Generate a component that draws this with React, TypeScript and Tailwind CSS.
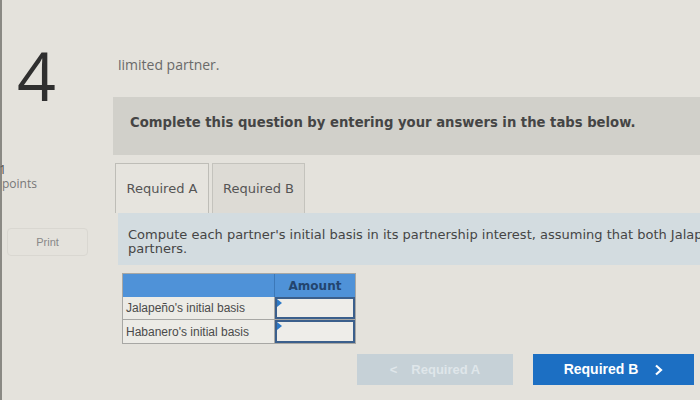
import React from "react";

export default function App() {
  return (
    <div className="w-[700px] h-[400px] overflow-hidden bg-[#e4e2dc] flex font-['DejaVu_Sans',sans-serif] text-[#444]">
      {/* left column */}
      <div className="w-[113px] shrink-0 flex flex-col border-l-2 border-[#8a8984]">
        <div className="h-[44px]" />
        <div className="pl-[15px] text-[68px] leading-[62px] font-['Open_Sans',sans-serif] font-normal text-[#2f2f2f]">4</div>
        <div className="h-[56px]" />
        <div className="text-[13px] leading-[14px] text-[#555] -ml-[3px] font-['Open_Sans',sans-serif]">1</div>
        <div className="text-[12px] leading-[16px] text-[#777] font-['Open_Sans',sans-serif]">points</div>
        <div className="h-[36px]" />
        <div className="ml-[5px] w-[81px] h-[28px] border border-[#d9d7d1] rounded-sm flex items-center justify-center text-[11px] text-[#888] font-['Liberation_Sans',sans-serif]">
          Print
        </div>
      </div>

      {/* right column */}
      <div className="flex-1 flex flex-col">
        <div className="h-[60px]" />
        <div className="ml-[5px] h-[16px] overflow-hidden text-[14px] leading-[15px] text-[#6a6a6a] font-['Open_Sans',sans-serif]">
          <div className="-mt-[3px]">limited partner.</div>
        </div>
        <div className="h-[21px]" />
        <div className="h-[58px] bg-[#d1d0ca] flex items-center pl-[17px] pb-[6px] text-[13.2px] font-bold text-[#454545] whitespace-nowrap">
          Complete this question by entering your answers in the tabs below.
        </div>
        <div className="h-[8px]" />
        <div className="flex h-[50px] pl-[2px] gap-[3px] text-[13px] text-[#555]">
          <div className="w-[94px] border border-b-0 border-[#bebdb7] bg-[#e6e4de] flex items-center justify-center">Required A</div>
          <div className="w-[93px] border border-b-0 border-[#c4c3bd] bg-[#dddbd5] flex items-center justify-center">Required B</div>
        </div>
        <div className="ml-[5px] h-[52px] bg-[#d3dce0] pl-[10px] pt-[15px] text-[13px] leading-[14px] text-[#454545] whitespace-nowrap overflow-hidden">
          Compute each partner's initial basis in its partnership interest, assuming that both Jalapeño and Habanero are
          <br />
          partners.
        </div>
        <div className="h-[8px]" />
        <div className="ml-[9px] w-[234px] border border-[#a7a7a4] font-['Liberation_Sans',sans-serif]">
          <div className="flex h-[23px] bg-[#4f92d8]">
            <div className="w-[152px] border-r border-[#3c78b8]" />
            <div className="flex-1 flex items-center justify-center text-[12px] font-bold text-[#23456e] font-['DejaVu_Sans',sans-serif]">Amount</div>
          </div>
          {["Jalapeño's initial basis", "Habanero's initial basis"].map((label, i) => (
            <div key={label} className={"flex h-[23px] bg-[#ecebe6] " + (i === 0 ? "border-b border-[#a7a7a4]" : "")}>
              <div className="w-[152px] border-r border-[#a7a7a4] flex items-center pl-[3px] text-[12px] text-[#4a4a4a]">{label}</div>
              <div className="flex-1 relative border-2 border-[#3b5f8c] bg-[#eeede9]">
                <div className="absolute left-0 top-0 w-0 h-0 border-t-[4px] border-b-[4px] border-l-[5px] border-t-transparent border-b-transparent border-l-[#2d79c7]" />
              </div>
            </div>
          ))}
        </div>
        <div className="h-[10px]" />
        <div className="flex gap-[20px] ml-[244px]">
          <div className="w-[156px] h-[31px] bg-[#c6d1d7] flex items-center justify-center gap-[14px] text-[13px] font-bold text-[#dfe6ea] font-['Liberation_Sans',sans-serif]">
            <span>&lt;</span>
            <span>Required A</span>
          </div>
          <div className="w-[161px] h-[31px] bg-[#1c6fc3] flex items-center justify-center gap-[16px] text-[14px] font-bold text-white font-['Liberation_Sans',sans-serif]">
            <span>Required B</span>
            <svg width="9" height="12" viewBox="0 0 9 12">
              <path d="M2 1.5 L7 6 L2 10.5" stroke="white" strokeWidth="2.2" fill="none" />
            </svg>
          </div>
        </div>
      </div>
    </div>
  );
}
